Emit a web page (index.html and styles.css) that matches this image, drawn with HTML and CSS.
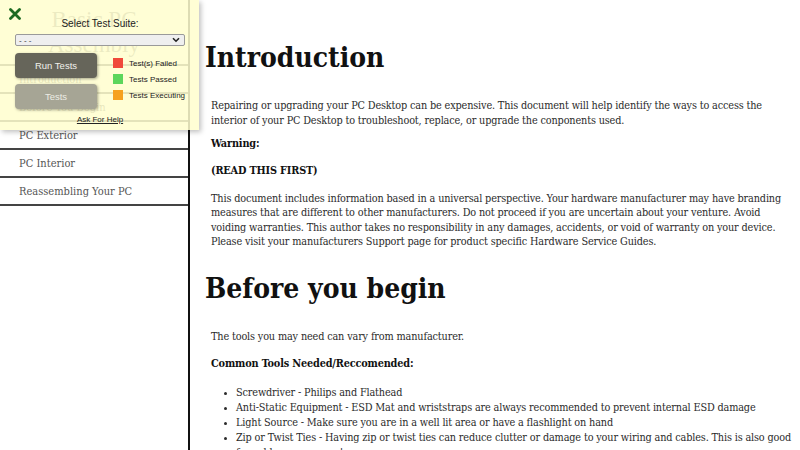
FILE: index.html
```html
<!DOCTYPE html>
<html lang="en">
<head>
<meta charset="utf-8">
<title>Basic PC Assembly</title>
<link rel="stylesheet" href="styles.css">
</head>
<body>
<div class="page">
  <aside class="sidebar">
    <div class="site-title">Basic PC<br>Assembly</div>
    <nav>
      <ul class="nav">
        <li>Introduction</li>
        <li>Before You Begin</li>
        <li>PC Exterior</li>
        <li>PC Interior</li>
        <li>Reassembling Your PC</li>
      </ul>
    </nav>
  </aside>
  <main class="content">
    <h1>Introduction</h1>
    <p>Repairing or upgrading your PC Desktop can be expensive. This document will help identify the ways to access the interior of your PC Desktop to troubleshoot, replace, or upgrade the conponents used.</p>
    <h4>Warning:</h4>
    <h4>(READ THIS FIRST)</h4>
    <p>This document includes information based in a universal perspective. Your hardware manufacturer may have branding measures that are different to other manufacturers. Do not proceed if you are uncertain about your venture. Avoid voiding warranties. This author takes no responsibility in any damages, accidents, or void of warranty on your device. Please visit your manufacturers Support page for product specific Hardware Service Guides.</p>
    <h1>Before you begin</h1>
    <p>The tools you may need can vary from manufacturer.</p>
    <h4 class="tools-heading">Common Tools Needed/Reccomended:</h4>
    <ul class="tools">
      <li>Screwdriver - Philips and Flathead</li>
      <li>Anti-Static Equipment - ESD Mat and wriststraps are always recommended to prevent internal ESD damage</li>
      <li>Light Source - Make sure you are in a well lit area or have a flashlight on hand</li>
      <li>Zip or Twist Ties - Having zip or twist ties can reduce clutter or damage to your wiring and cables. This is also good for cable management</li>
    </ul>
  </main>
</div>

<div class="test-panel">
  <div class="close">
    <svg width="12" height="12" viewBox="0 0 12 12"><path d="M1.5 1.5 L10.5 10.5 M10.5 1.5 L1.5 10.5" stroke="#1d6b22" stroke-width="2.8" stroke-linecap="round"/></svg>
  </div>
  <div class="panel-label">Select Test Suite:</div>
  <div class="select"><span>- - -</span>
    <svg width="8" height="6" viewBox="0 0 8 6"><path d="M1 1.2 L4 4.2 L7 1.2" fill="none" stroke="#222" stroke-width="1.6"/></svg>
  </div>
  <div class="panel-row">
    <div class="buttons">
      <div class="btn btn-run">Run Tests</div>
      <div class="btn btn-tests">Tests</div>
    </div>
    <ul class="legend">
      <li><span class="swatch failed"></span>Test(s) Failed</li>
      <li><span class="swatch passed"></span>Tests Passed</li>
      <li><span class="swatch executing"></span>Tests Executing</li>
    </ul>
  </div>
  <div class="help">Ask For Help</div>
</div>
</body>
</html>
```
FILE: styles.css
```css
* { box-sizing: border-box; }
html, body { margin: 0; padding: 0; }
body {
  background: #fff;
  font-family: "DejaVu Serif", "Liberation Serif", serif;
  font-stretch: condensed;
  color: #2b2b2b;
  overflow: hidden;
}
.page {
  display: flex;
  min-height: 450px;
}
.sidebar {
  width: 190px;
  flex: 0 0 190px;
  border-right: 2px solid #111;
}
.site-title {
  height: 66px;
  padding-top: 7px;
  text-align: center;
  font-family: "Liberation Serif", serif;
  font-size: 23px;
  line-height: 25px;
  color: #777;
  border-bottom: 2px solid #444;
}
.nav {
  list-style: none;
  margin: 0;
  padding: 0;
}
.nav li {
  height: 28px;
  line-height: 28px;
  padding-left: 19px;
  font-size: 11px;
  color: #555;
  border-bottom: 2px solid #444;
}
.content {
  flex: 1;
  padding: 19px 8px 0 15px;
}
.content h1 {
  font-size: 28px;
  font-weight: bold;
  color: #111;
  margin: 19px 0 21px 0;
  line-height: 40px;
}
.content p, .content h4 {
  margin: 0 0 0 6px;
  font-size: 10.8px;
  letter-spacing: -0.15px;
  line-height: 14.5px;
}
.content h4 {
  font-weight: bold;
  color: #111;
}
.content p { margin-bottom: 8.5px; }
.content h4 { margin-bottom: 13px; }
.content h4.tools-heading { margin-top: 13px; }
.tools {
  margin: 0 0 0 6px;
  padding-left: 25px;
  font-size: 10.8px;
  letter-spacing: -0.15px;
  line-height: 15px;
}
.tools li::marker {
  font-size: 9px;
}
.test-panel {
  position: absolute;
  top: 0;
  left: 0;
  width: 199px;
  height: 130px;
  background: rgba(255, 254, 206, 0.86);
  box-shadow: 2px 2px 5px rgba(0, 0, 0, 0.25);
  font-family: "Liberation Sans", Arial, sans-serif;
  font-stretch: normal;
  padding: 8px 10px 0 15px;
}
.close {
  position: absolute;
  top: 8px;
  left: 9px;
  width: 12px;
  height: 12px;
}
.close svg { display: block; }
.panel-label {
  text-align: center;
  font-size: 10px;
  line-height: 13px;
  margin-top: 9px;
  margin-right: 4px;
  color: #222;
}
.select {
  margin-top: 4px;
  margin-right: 4px;
  height: 12px;
  background: #efefef;
  border: 1px solid #9a9a9a;
  border-radius: 2px;
  display: flex;
  align-items: center;
  justify-content: space-between;
  padding: 0 4px 0 3px;
  font-size: 8px;
  color: #333;
}
.panel-row {
  display: flex;
  margin-top: 7px;
}
.buttons {
  width: 82px;
  flex: 0 0 82px;
  display: flex;
  flex-direction: column;
  gap: 6px;
}
.btn {
  height: 25px;
  border-radius: 4px;
  display: flex;
  align-items: center;
  justify-content: center;
  font-size: 9.5px;
  box-shadow: 1px 1px 3px rgba(0, 0, 0, 0.35);
}
.btn-run {
  background: #66655a;
  color: #f1f1ea;
}
.btn-tests {
  background: #a6a595;
  color: #ecece4;
}
.legend {
  list-style: none;
  margin: 2px 0 0 16px;
  padding: 0;
  white-space: nowrap;
}
.legend li {
  display: flex;
  align-items: center;
  font-size: 8px;
  color: #222;
  height: 16px;
}
.swatch {
  width: 10px;
  height: 10px;
  margin-right: 6px;
  display: inline-block;
}
.failed { background: #f0493a; }
.passed { background: #5cd65c; }
.executing { background: #f6a11f; }
.help {
  text-align: center;
  font-size: 8px;
  text-decoration: underline;
  color: #222;
  margin-top: 6px;
  margin-right: 4px;
}
```
